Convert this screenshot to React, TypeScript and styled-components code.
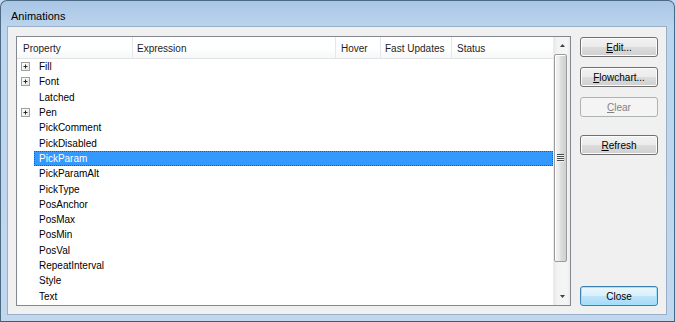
import React from "react";
import styled, { createGlobalStyle } from "styled-components";

interface PropRow {
  name: string;
  expandable?: boolean;
  selected?: boolean;
}

const rows: PropRow[] = [
  { name: "Fill", expandable: true },
  { name: "Font", expandable: true },
  { name: "Latched" },
  { name: "Pen", expandable: true },
  { name: "PickComment" },
  { name: "PickDisabled" },
  { name: "PickParam", selected: true },
  { name: "PickParamAlt" },
  { name: "PickType" },
  { name: "PosAnchor" },
  { name: "PosMax" },
  { name: "PosMin" },
  { name: "PosVal" },
  { name: "RepeatInterval" },
  { name: "Style" },
  { name: "Text" },
];

const columns = [
  { label: "Property", width: 116, pad: 6 },
  { label: "Expression", width: 203, pad: 4 },
  { label: "Hover", width: 45, pad: 5 },
  { label: "Fast Updates", width: 71, pad: 4 },
  { label: "Status", width: 0, pad: 5 },
];

const PlusBox = () => (
  <svg width="9" height="9" viewBox="0 0 9 9">
    <defs>
      <linearGradient id="pb" x1="0" y1="0" x2="1" y2="1">
        <stop offset="0" stopColor="#ffffff" />
        <stop offset="1" stopColor="#e6e6e6" />
      </linearGradient>
    </defs>
    <rect x="0.5" y="0.5" width="8" height="8" fill="url(#pb)" stroke="#a0a0a0" />
    <path d="M2.5 4.5h4M4.5 2.5v4" stroke="#2a2a2a" strokeWidth="1" />
  </svg>
);

const Arrow = ({ down }: { down?: boolean }) => (
  <svg width="5" height="3" viewBox="0 0 5 3">
    <path d={down ? "M0 0h5L2.5 3z" : "M0 3h5L2.5 0z"} fill="#404040" />
  </svg>
);

const Grip = () => (
  <svg width="7" height="8" viewBox="0 0 7 8">
    <path d="M0 0.5h7M0 2.5h7M0 4.5h7M0 6.5h7" stroke="#4a4a4a" />
    <path d="M0 1.5h7M0 3.5h7M0 5.5h7M0 7.5h7" stroke="#f4f4f4" />
  </svg>
);

export default function App() {
  return (
    <>
      <GlobalStyle />
      <Window>
        <TitleBar>Animations</TitleBar>
        <Client>
          <ListBox>
            <ListMain>
              <Header>
                {columns.map((c) => (
                  <HeaderCell key={c.label} $width={c.width} $pad={c.pad}>
                    {c.label}
                  </HeaderCell>
                ))}
              </Header>
              {rows.map((r) => (
                <Row key={r.name}>
                  <Expander>{r.expandable && <PlusBox />}</Expander>
                  <Label $selected={r.selected}>{r.name}</Label>
                </Row>
              ))}
            </ListMain>
            <ScrollBar>
              <ArrowBtn>
                <Arrow />
              </ArrowBtn>
              <Track>
                <Thumb>
                  <Grip />
                </Thumb>
              </Track>
              <ArrowBtn>
                <Arrow down />
              </ArrowBtn>
            </ScrollBar>
          </ListBox>

          <ButtonColumn>
            <Button>
              <U>E</U>dit...
            </Button>
            <Button>
              <U>F</U>lowchart...
            </Button>
            <Button disabled>
              <U>C</U>lear
            </Button>
            <Button $gapTop={8}>
              <U>R</U>efresh
            </Button>
            <Button $primary $pushDown>
              Close
            </Button>
          </ButtonColumn>
        </Client>
      </Window>
    </>
  );
}

const GlobalStyle = createGlobalStyle`
  html, body {
    margin: 0;
    padding: 0;
    background: #c4d9ef;
  }
  body {
    font-family: "Liberation Sans", Arial, sans-serif;
  }
`;

const Window = styled.div`
  width: 675px;
  height: 322px;
  box-sizing: border-box;
  border: 1px solid #4d6a85;
  border-right-color: #3c6f89;
  border-bottom-color: #1f6a84;
  border-radius: 7px 7px 0 0;
  background: linear-gradient(#a9c6e6 0px, #bcd4ed 26px, #c1d7ee 100%);
  padding: 0 7px 6px 6px;
  display: flex;
  flex-direction: column;
`;

const TitleBar = styled.div`
  height: 25px;
  box-sizing: border-box;
  padding: 5px 0 0 4px;
  display: flex;
  align-items: center;
  font-size: 11px;
  color: #000;
`;

const Client = styled.div`
  flex: 1;
  display: flex;
  gap: 9px;
  padding: 9px 8px 8px 8px;
  background: #f0f0f0;
  border: 1px solid #98afc7;
  min-height: 0;
`;

const ListBox = styled.div`
  width: 555px;
  box-sizing: border-box;
  border: 1px solid #828790;
  background: #fff;
  display: flex;
  overflow: hidden;
`;

const ListMain = styled.div`
  flex: 1;
  display: flex;
  flex-direction: column;
  overflow: hidden;
`;

const Header = styled.div`
  display: flex;
  height: 22px;
  flex-shrink: 0;
  box-sizing: border-box;
  border-bottom: 1px solid #e2e3e5;
  background: linear-gradient(#ffffff 0%, #ffffff 55%, #f6f7f8 100%);
`;

const HeaderCell = styled.div<{ $width: number; $pad: number }>`
  ${(p) => (p.$width ? `width: ${p.$width}px;` : "flex: 1;")}
  box-sizing: border-box;
  padding: 2px 0 0 ${(p) => p.$pad}px;
  border-right: 1px solid ${(p) => (p.$width ? "#e3e8ee" : "transparent")};
  display: flex;
  align-items: center;
  font-size: 10px;
  color: #1e1e1e;
  white-space: nowrap;
`;

const Row = styled.div`
  display: flex;
  height: 15.3px;
  flex-shrink: 0;
`;

const Expander = styled.div`
  width: 17px;
  display: flex;
  align-items: center;
  padding-left: 4px;
  box-sizing: border-box;
  svg {
    display: block;
  }
`;

const Label = styled.div<{ $selected?: boolean }>`
  flex: 1;
  display: flex;
  align-items: center;
  box-sizing: border-box;
  font-size: 10px;
  color: ${(p) => (p.$selected ? "#fff" : "#000")};
  background: ${(p) => (p.$selected ? "#3399ff" : "transparent")};
  border: 1px dotted ${(p) => (p.$selected ? "#0c5fc4" : "transparent")};
  padding-left: 4px;
`;

const ScrollBar = styled.div`
  width: 17px;
  display: flex;
  flex-direction: column;
  background: linear-gradient(90deg, #e8e8e8 0%, #f3f3f3 20%, #f5f5f5 80%, #ececec 100%);
  border-left: 1px solid #ececec;
  box-sizing: border-box;
`;

const ArrowBtn = styled.div`
  height: 17px;
  display: flex;
  align-items: center;
  justify-content: center;
  flex-shrink: 0;
  svg {
    display: block;
  }
`;

const Track = styled.div`
  flex: 1;
  display: flex;
  flex-direction: column;
`;

const Thumb = styled.div`
  width: 13px;
  height: 208px;
  box-sizing: border-box;
  border: 1px solid #9a9a9a;
  border-radius: 2px;
  background: linear-gradient(90deg, #f4f4f4 0%, #ececec 35%, #dcdcdc 55%, #cfcfcf 100%);
  box-shadow: inset 1px 1px 0 #ffffff;
  display: flex;
  align-items: center;
  justify-content: center;
  svg {
    display: block;
  }
`;

const ButtonColumn = styled.div`
  width: 78px;
  display: flex;
  flex-direction: column;
  gap: 10px;
  padding-top: 1px;
`;

const Button = styled.button<{ $primary?: boolean; $gapTop?: number; $pushDown?: boolean }>`
  height: 20px;
  width: 78px;
  padding: 0;
  box-sizing: border-box;
  font-family: "Liberation Sans", Arial, sans-serif;
  font-size: 10px;
  color: #000;
  border-radius: 3px;
  border: 1px solid ${(p) => (p.$primary ? "#3c7fb1" : "#707070")};
  background: ${(p) =>
    p.$primary
      ? "linear-gradient(#eaf6fd 0%, #d9f0fc 50%, #bee6fd 50%, #a7d9f5 100%)"
      : "linear-gradient(#f2f2f2 0%, #ebebeb 50%, #dddddd 50%, #cfcfcf 100%)"};
  box-shadow: inset 0 0 0 1px ${(p) => (p.$primary ? "#9fe2fc" : "#fcfcfc")};
  margin-top: ${(p) => (p.$pushDown ? "auto" : `${p.$gapTop ?? 0}px`)};
  cursor: default;

  &:disabled {
    color: #838383;
    border-color: #adb2b5;
    background: #f4f4f4;
    box-shadow: none;
  }
`;

const U = styled.span`
  text-decoration: underline;
`;
